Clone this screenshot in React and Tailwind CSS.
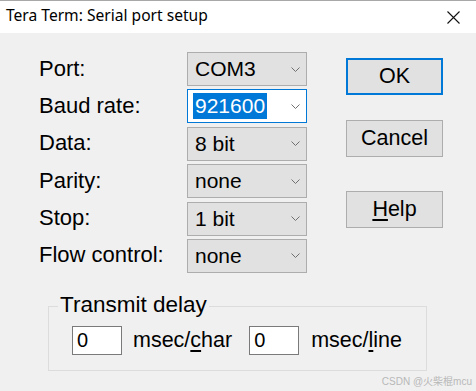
import React from "react";

const Chevron = () => (
  <svg width="9" height="5" viewBox="0 0 9 5" className="shrink-0">
    <polyline points="0.5,0.5 4.5,4.5 8.5,0.5" fill="none" stroke="#707070" strokeWidth="1" />
  </svg>
);

const Combo = ({ value, active }) => (
  <div
    className={
      "w-[120px] h-[34px] flex items-center justify-between pl-[5px] pr-[6px] border text-[21px] " +
      (active ? "bg-white border-[#0078d7]" : "bg-[#e1e1e1] border-[#adadad]")
    }
  >
    {active ? (
      <span className="bg-[#0078d7] text-white px-[2px] leading-[26px]">{value}</span>
    ) : (
      <span className="px-[2px] leading-[26px]">{value}</span>
    )}
    <Chevron />
  </div>
);

const Btn = ({ children, focus, className = "" }) => (
  <div
    className={
      "w-[97px] h-[37px] flex items-center justify-center bg-[#e1e1e1] " +
      (focus ? "border-2 border-[#0078d7]" : "border border-[#adadad]") +
      " " +
      className
    }
  >
    {children}
  </div>
);

export default function App() {
  const rows = [
    ["Port:", "COM3"],
    ["Baud rate:", "921600", true],
    ["Data:", "8 bit"],
    ["Parity:", "none"],
    ["Stop:", "1 bit"],
    ["Flow control:", "none"],
  ];
  return (
    <div
      className="relative w-[476px] h-[391px] bg-[#f0f0f0] overflow-hidden text-black"
      style={{ fontFamily: '"Liberation Sans", Arial, sans-serif' }}
    >
      <div className="h-[1px] bg-[#a8a8a8]" />
      <div className="h-[32px] bg-white flex items-center justify-between pl-[6px] pr-[16px]">
        <span
          className="text-[15.6px] leading-none pb-[2px]"
          style={{ fontFamily: '"Noto Sans", "Open Sans", sans-serif' }}
        >
          Tera Term: Serial port setup
        </span>
        <svg width="13" height="13" viewBox="0 0 13 13">
          <path d="M0.5 0.5 L12.5 12.5 M12.5 0.5 L0.5 12.5" stroke="#111" strokeWidth="1.1" fill="none" />
        </svg>
      </div>

      <div className="flex text-[22px]">
        <div className="flex flex-col gap-[3.4px] pl-[39px] pt-[19px]">
          {rows.map(([label, value, active]) => (
            <div key={label} className="flex items-center h-[34px]">
              <span className="w-[148px] leading-[26px] pb-[1px]">{label}</span>
              <Combo value={value} active={active} />
            </div>
          ))}
        </div>
        <div className="flex flex-col pl-[39px] pt-[25px] text-[21.5px]">
          <Btn focus>OK</Btn>
          <Btn className="mt-[25px]">Cancel</Btn>
          <Btn className="mt-[34px]">
            <span>
              <span className="underline underline-offset-[3px]">H</span>elp
            </span>
          </Btn>
        </div>
      </div>

      <div className="relative ml-[48px] mt-[33px] w-[379px] h-[65px] border border-[#dcdcdc] text-[21.5px]">
        <span className="absolute left-[9px] -top-[14px] bg-[#f0f0f0] px-[2px] leading-[24px] text-[22.5px]">
          Transmit delay
        </span>
        <div className="flex items-center pl-[23px] pt-[17px]">
          <div className="w-[50px] h-[29px] bg-white border border-[#7a7a7a] flex items-center pl-[4px] text-[20px]">
            0
          </div>
          <span className="ml-[11px]">
            msec/<span className="underline underline-offset-[3px]">c</span>har
          </span>
          <div className="ml-[17px] w-[50px] h-[29px] bg-white border border-[#7a7a7a] flex items-center pl-[4px] text-[20px]">
            0
          </div>
          <span className="ml-[12px]">
            msec/<span className="underline underline-offset-[3px]">l</span>ine
          </span>
        </div>
      </div>

      <div
        className="absolute right-[4px] bottom-[4px] text-[10px] leading-none text-[#b8b8b8]"
        style={{ fontFamily: '"Liberation Sans", "Noto Sans CJK SC", sans-serif' }}
      >
        CSDN @火柴棍mcu
      </div>
    </div>
  );
}
